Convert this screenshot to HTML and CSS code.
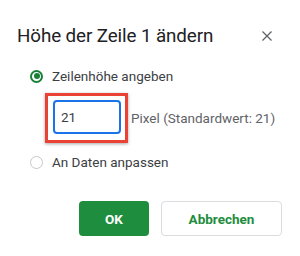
FILE: index.html
```html
<!DOCTYPE html>
<html lang="de">
<head>
    <meta charset="UTF-8">
    <title>Höhe der Zeile 1 ändern</title>
    <link rel="stylesheet" href="styles.css">
</head>
<body>
    <div class="dialog">
        <!-- Kopfzeile -->
        <div class="dialog-header">
            <h2>Höhe der Zeile 1 ändern</h2>
            <span class="close">
                <svg width="10" height="10" viewBox="0 0 10 10">
                    <path d="M0.5 0.5 L9.5 9.5 M9.5 0.5 L0.5 9.5" stroke="#5f6368" stroke-width="1.3" fill="none"/>
                </svg>
            </span>
        </div>

        <!-- Optionen -->
        <label class="option">
            <span class="radio checked"></span>
            Zeilenhöhe angeben
        </label>

        <div class="height-row">
            <div class="highlight">
                <input type="text" class="height-input" value="21">
            </div>
            <span class="hint">Pixel (Standardwert: 21)</span>
        </div>

        <label class="option option-fit">
            <span class="radio"></span>
            An Daten anpassen
        </label>

        <div class="buttons">
            <button class="btn-ok">OK</button>
            <button class="btn-cancel">Abbrechen</button>
        </div>
    </div>
</body>
</html>
```

FILE: styles.css
```css
body {
    margin: 0;
    background: #fff;
    font-family: Roboto, 'Liberation Sans', sans-serif;
    color: #3c4043;
}

.dialog {
    width: 300px;
    padding: 24px 0 0 17px;
    box-sizing: border-box;
}

.dialog-header {
    display: flex;
    align-items: center;
    justify-content: space-between;
    height: 24px;
    padding-right: 28px;
}

.dialog-header h2 {
    margin: 0;
    font-size: 18.8px;
    font-weight: 400;
    color: #202124;
    line-height: 24px;
    letter-spacing: -0.1px;
}

.close {
    display: flex;
}

/* Radio-Optionen */
.option {
    display: flex;
    align-items: center;
    font-size: 13.5px;
    margin-left: 13px;
}

.option:first-of-type {
    margin-top: 20px;
}

.radio {
    width: 13px;
    height: 13px;
    box-sizing: border-box;
    border: 1.5px solid #c4c7cb;
    border-radius: 50%;
    margin-right: 9px;
    position: relative;
}

.radio.checked {
    border: 2px solid #188038;
}

.radio.checked::after {
    content: "";
    position: absolute;
    left: 1.5px;
    top: 1.5px;
    width: 6px;
    height: 6px;
    border-radius: 50%;
    background: #188038;
}

.height-row {
    display: flex;
    align-items: center;
    margin-top: 9px;
    margin-left: 28px;
}

.highlight {
    border: 3px solid #ea4335;
    padding: 4px 4px 6px 5px;
    box-shadow: 0 1px 3px rgba(0, 0, 0, 0.35);
}

.height-input {
    width: 52px;
    height: 30px;
    border: 2px solid #1a73e8;
    border-radius: 4px;
    padding: 0 6px;
    font-family: inherit;
    font-size: 13.5px;
    color: #3c4043;
    box-sizing: content-box;
    outline: none;
    display: block;
}

.hint {
    margin-left: 3px;
    font-size: 13.5px;
    color: #5f6368;
}

.option-fit {
    margin-top: 11px;
}

/* Schaltflächen */
.buttons {
    display: flex;
    gap: 12px;
    margin-top: 31px;
    margin-left: 62px;
}

.buttons button {
    height: 35px;
    border-radius: 4px;
    font-family: inherit;
    font-size: 13.5px;
    font-weight: 700;
}

.btn-ok {
    width: 70px;
    background: #1e8e3e;
    color: #fff;
    border: none;
}

.btn-cancel {
    width: 121px;
    background: #fff;
    color: #1e8e3e;
    border: 1px solid #dadce0;
}
```
